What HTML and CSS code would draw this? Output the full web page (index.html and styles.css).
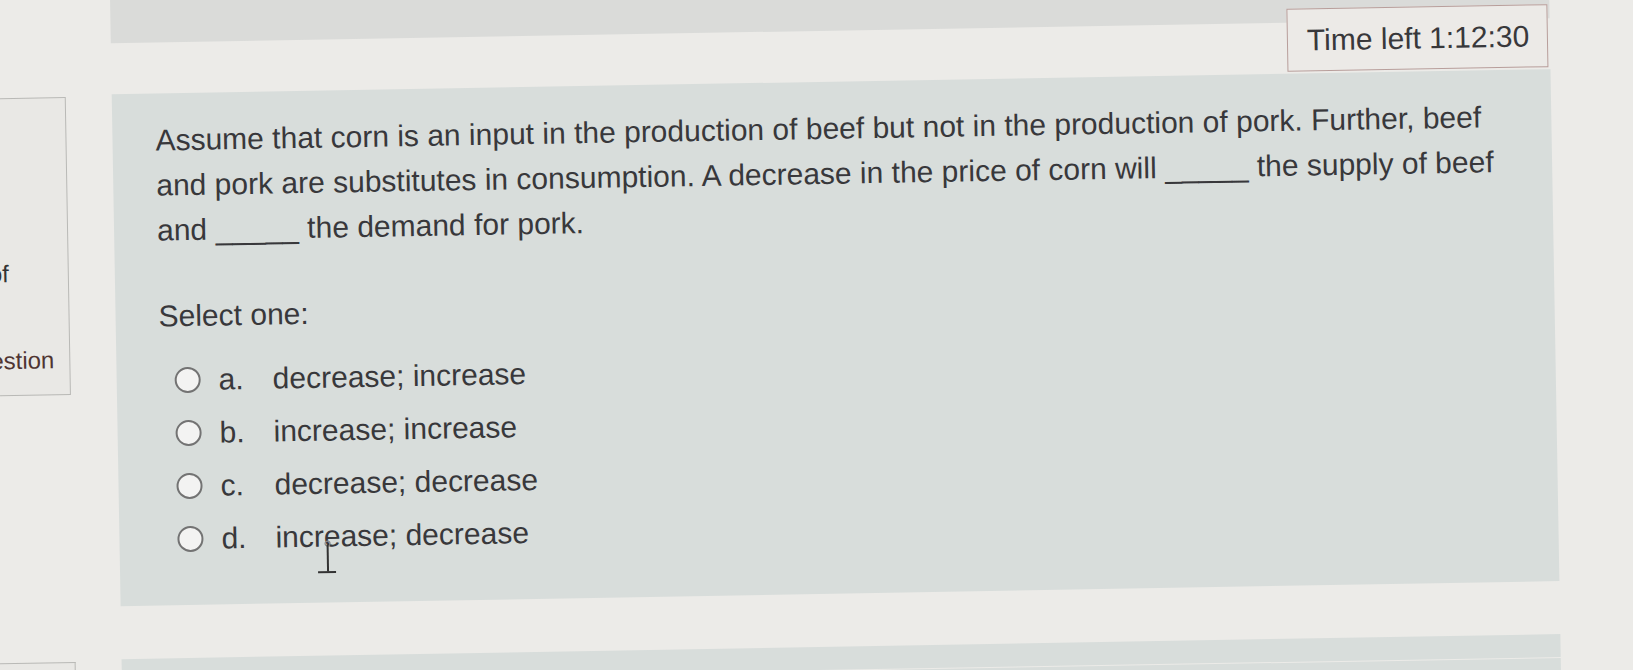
FILE: index.html
```html
<!DOCTYPE html>
<html lang="en">
<head>
<meta charset="utf-8">
<title>Quiz question</title>
<link rel="stylesheet" href="styles.css">
</head>
<body>
<div class="page">
  <aside class="side">
    <div class="info">
      <div class="info-line line-mark">Marked out of</div>
      <div class="info-line line-flag">Flag question</div>
    </div>
    <div class="info info-next"></div>
  </aside>
  <main class="content">
    <div class="prev-q"></div>
    <section class="que">
      <p class="qtext">Assume that corn is an input in the production of beef but not in the production of pork. Further, beef and pork are substitutes in consumption. A decrease in the price of corn will _____ the supply of beef and _____ the demand for pork.</p>
      <p class="prompt">Select one:</p>
      <div class="answers">
        <label class="opt"><span class="radio"></span><span class="letter">a.</span><span class="opt-text">decrease; increase</span></label>
        <label class="opt"><span class="radio"></span><span class="letter">b.</span><span class="opt-text">increase; increase</span></label>
        <label class="opt"><span class="radio"></span><span class="letter">c.</span><span class="opt-text">decrease; decrease</span></label>
        <label class="opt"><span class="radio"></span><span class="letter">d.</span><span class="opt-text">increase; decrease</span></label>
      </div>
      <svg class="cursor" width="20" height="36" viewBox="0 0 20 36" aria-hidden="true">
        <circle cx="11" cy="4" r="2.5" fill="none" stroke="#8a8a8a" stroke-width="1.2"/>
        <path d="M11 5 V32" stroke="#333" stroke-width="2" fill="none"/>
        <path d="M1 32.5 H19" stroke="#333" stroke-width="2" fill="none"/>
      </svg>
    </section>
    <div class="next-q"></div>
  </main>
  <div class="timer">Time left 1:12:30</div>
</div>
</body>
</html>
```

FILE: styles.css
```css
html, body {
  margin: 0;
  padding: 0;
  background: #ecebe8;
  overflow: hidden;
}

.page {
  position: relative;
  width: 1633px;
  height: 670px;
  display: flex;
  font-family: "Liberation Sans", Arial, Helvetica, sans-serif;
  color: #38383b;
  transform: rotate(-1deg);
  transform-origin: 816px 335px;
}

/* left column */
.side {
  width: 116px;
  flex: none;
  display: flex;
  flex-direction: column;
}

.info {
  box-sizing: border-box;
  flex: none;
  width: 80px;
  margin-left: -10px;
  margin-top: 84px;
  height: 298px;
  border: 1.5px solid #b9b9b6;
  background: #e9e8e5;
  overflow: hidden;
  display: flex;
  flex-direction: column;
  align-items: flex-end;
  padding-top: 160px;
}

.info-line {
  white-space: nowrap;
  font-size: 24px;
  line-height: 30px;
}

.line-mark {
  margin-right: 59px;
  color: #333;
}

.line-flag {
  margin-top: 57px;
  margin-right: 15px;
  color: #4f3532;
}

.info-next {
  margin-top: 267px;
  height: 21px;
  padding: 0;
  border-bottom: 0;
}

/* main column */
.content {
  width: 1439px;
  flex: none;
  display: flex;
  flex-direction: column;
}

.prev-q {
  flex: none;
  margin-top: -40px;
  height: 71px;
  background: #dadbd9;
}

.que {
  flex: none;
  position: relative;
  margin-top: 51px;
  height: 512px;
  box-sizing: border-box;
  background: #d8dddb;
  padding: 24px 0 0 43px;
}

.qtext {
  margin: 0;
  max-width: 1360px;
  font-size: 30px;
  line-height: 45px;
}

.prompt {
  margin: 41px 0 0;
  font-size: 30px;
  line-height: 45px;
}

.answers {
  margin-top: 15px;
  display: flex;
  flex-direction: column;
}

.opt {
  display: flex;
  align-items: center;
  height: 53px;
  font-size: 30px;
  line-height: 53px;
}

.radio {
  box-sizing: border-box;
  width: 26px;
  height: 26px;
  margin-left: 15px;
  border: 2.5px solid #737373;
  border-radius: 50%;
  background: #f3f3f2;
  flex: none;
}

.letter {
  margin-left: 18px;
  width: 54px;
  flex: none;
}

.cursor {
  position: absolute;
  left: 197px;
  top: 449px;
}

.next-q {
  margin-top: 53px;
  flex: 1;
  background: #d8dddb;
  box-shadow: 0 24px 0 0 #d8dddb;
}

/* timer overlay */
.timer {
  position: absolute;
  left: 1292px;
  top: 17px;
  box-sizing: border-box;
  width: 261px;
  height: 63px;
  padding: 8px 0 0 19px;
  border: 1.5px solid #b89e9b;
  background: #eceae7;
  font-size: 30px;
  line-height: 45px;
  color: #38383b;
  white-space: nowrap;
}
```
